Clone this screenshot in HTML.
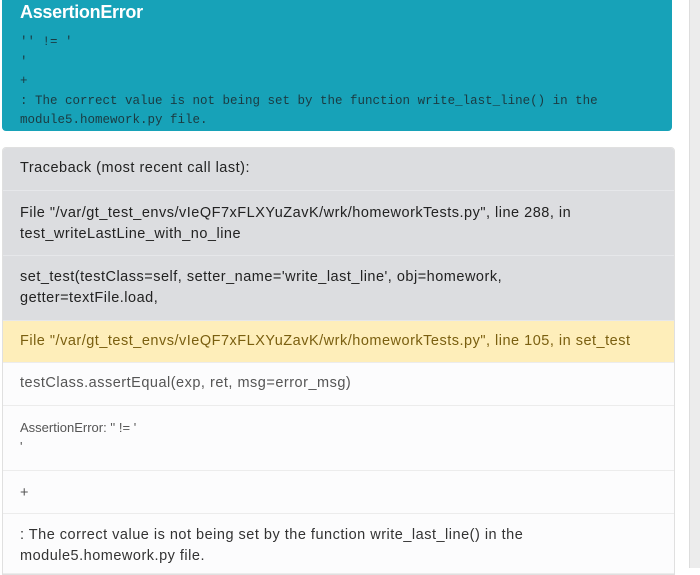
<!DOCTYPE html>
<html><head><style>
body{margin:0;width:700px;height:568px;overflow:hidden;background:#fff;font-family:"Liberation Sans",sans-serif;position:relative}
.sb{position:absolute;left:689px;top:0;width:11px;height:568px;background:#ececec;border-left:1px solid #ddd}
.teal{position:absolute;left:2px;top:0;width:670px;height:131px;background:#17a2b8;border-radius:0 0 4px 4px;color:#1b3b42}
.teal h1{margin:0;position:absolute;left:18px;top:2px;font-size:18px;color:#fff;font-weight:bold;letter-spacing:-0.3px}
.mono{position:absolute;left:18px;top:33px;font-family:"Liberation Mono",monospace;font-size:12.5px;line-height:19.5px;white-space:pre}
.list{position:absolute;left:2px;top:147px;width:671px;border:1px solid #e0e0e0;border-radius:4px 4px 0 0;overflow:hidden}
.r{box-sizing:border-box;padding:0 17px;font-size:14.5px;line-height:21px;color:#222;border-bottom:1px solid #ececec;letter-spacing:0.5px}
.g{background:#dcdde0;border-bottom-color:#e6e7ea}
.y{background:#feeeba;color:#7a5f10}
.w{background:#fcfcfd;color:#555}
</style></head><body>
<div class="teal"><h1>AssertionError</h1><div class="mono">'' != '
'
+
: The correct value is not being set by the function write_last_line() in the
module5.homework.py file.</div></div>
<div class="list">
<div class="r g" style="height:43px;padding-top:10px">Traceback (most recent call last):</div>
<div class="r g" style="height:65px;padding-top:12px">File "/var/gt_test_envs/vIeQF7xFLXYuZavK/wrk/homeworkTests.py", line 288, in<br>test_writeLastLine_with_no_line</div>
<div class="r g" style="height:65px;padding-top:11px">set_test(testClass=self, setter_name='write_last_line', obj=homework,<br>getter=textFile.load,</div>
<div class="r y" style="height:42px;padding-top:10px">File "/var/gt_test_envs/vIeQF7xFLXYuZavK/wrk/homeworkTests.py", line 105, in set_test</div>
<div class="r w" style="height:43px;padding-top:10px">testClass.assertEqual(exp, ret, msg=error_msg)</div>
<div class="r w" style="height:65px;padding-top:12px;font-size:13px;line-height:19px;letter-spacing:0">AssertionError: '' != '<br>'</div>
<div class="r w" style="height:43px;padding-top:12px">+</div>
<div class="r w" style="height:60px;padding-top:11px;color:#333">: The correct value is not being set by the function write_last_line() in the<br>module5.homework.py file.</div>
</div>
<div class="sb"></div>
</body></html>
